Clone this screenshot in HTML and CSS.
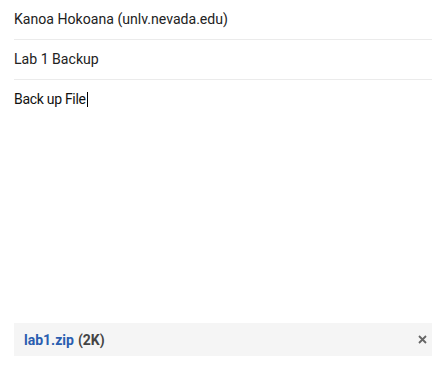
FILE: index.html
```html
<!DOCTYPE html>
<html>
<head>
<meta charset="utf-8">
<link rel="stylesheet" href="styles.css">
</head>
<body>
<div class="compose">
  <div class="field">Kanoa Hokoana (unlv.nevada.edu)</div>
  <div class="field">Lab 1 Backup</div>
  <div class="body">Back up File<span class="caret"></span></div>
  <div class="attachment">
    <span class="name">lab1.zip</span><span class="size">(2K)</span>
    <svg class="close" width="9" height="9" viewBox="0 0 9 9"><path d="M1 1L8 8M8 1L1 8" stroke="#666" stroke-width="1.8"/></svg>
  </div>
</div>
</body>
</html>
```
FILE: styles.css
```css
html, body {
  margin: 0;
  padding: 0;
  background: #fff;
}
.compose {
  height: 365px;
  display: flex;
  flex-direction: column;
  padding: 0 15px 0 14px;
  box-sizing: border-box;
  font-family: Roboto, Arial, sans-serif;
  font-size: 14.1px;
  color: #222;
}
.field {
  height: 39px;
  line-height: 39px;
  border-bottom: 1px solid #ebebeb;
}
.body {
  flex: 1;
  padding-top: 9px;
  line-height: 20px;
  font-size: 14px;
  letter-spacing: -0.3px;
  color: #111;
}
.caret {
  display: inline-block;
  width: 1px;
  height: 15px;
  margin-left: 1px;
  background: #000;
  vertical-align: -3px;
}
.attachment {
  height: 33px;
  margin-bottom: 9px;
  background: #f5f5f5;
  display: flex;
  align-items: center;
  padding: 0 5px 0 10px;
  font-weight: bold;
  font-size: 14px;
}
.name {
  color: #2a5db0;
  margin-right: 4px;
}
.size {
  color: #444;
  flex: 1;
}
.close {
  display: block;
}
```
